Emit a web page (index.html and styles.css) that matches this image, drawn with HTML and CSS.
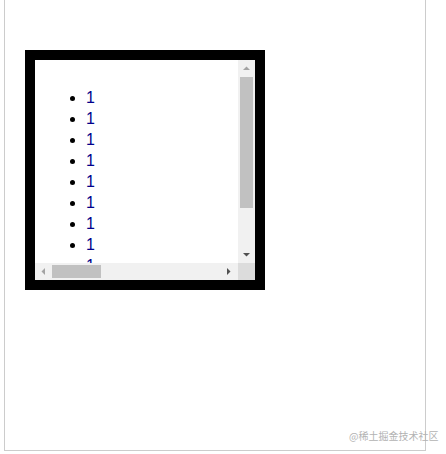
FILE: index.html
```html
<!DOCTYPE html>
<html lang="zh">
<head>
<meta charset="utf-8">
<title>scroll box</title>
<link rel="stylesheet" href="styles.css">
</head>
<body>
<div class="frame">
  <div class="box">
    <div class="scroller">
      <div class="viewport">
        <div class="content">
          <ul class="list">
            <li><a class="item">1</a></li>
            <li><a class="item">1</a></li>
            <li><a class="item">1</a></li>
            <li><a class="item">1</a></li>
            <li><a class="item">1</a></li>
            <li><a class="item">1</a></li>
            <li><a class="item">1</a></li>
            <li><a class="item">1</a></li>
            <li><a class="item">1</a></li>
            <li><a class="item">1</a></li>
          </ul>
        </div>
      </div>
      <div class="vbar">
        <div class="btn"><svg width="17" height="17" viewBox="0 0 17 17"><polygon class="arrow-off" points="5,10 12,10 8.5,6.5"/></svg></div>
        <div class="vtrack"><div class="vthumb"></div></div>
        <div class="btn"><svg width="17" height="17" viewBox="0 0 17 17"><polygon class="arrow-on" points="5,7 12,7 8.5,10.5"/></svg></div>
      </div>
      <div class="hbar">
        <div class="btn"><svg width="17" height="17" viewBox="0 0 17 17"><polygon class="arrow-off" points="10,5 10,12 6.5,8.5"/></svg></div>
        <div class="htrack"><div class="hthumb"></div></div>
        <div class="btn"><svg width="17" height="17" viewBox="0 0 17 17"><polygon class="arrow-on" points="6,5 6,12 9.5,8.5"/></svg></div>
      </div>
      <div class="corner"></div>
    </div>
  </div>
</div>
<div class="watermark">@稀土掘金技术社区</div>
</body>
</html>
```
FILE: styles.css
```css
html, body {
  margin: 0;
  padding: 0;
  background: #ffffff;
}

body {
  position: relative;
  width: 446px;
  height: 454px;
  overflow: hidden;
  font-family: "Liberation Sans", Arial, sans-serif;
}

.frame {
  box-sizing: border-box;
  margin-left: 4px;
  width: 422px;
  height: 451px;
  border: 1px solid #cccccc;
  border-top: none;
  padding: 50px 0 0 20px;
}

.box {
  width: 220px;
  height: 220px;
  border: 10px solid #000000;
  background: #ffffff;
}

.scroller {
  display: grid;
  grid-template-columns: 203px 17px;
  grid-template-rows: 203px 17px;
  width: 220px;
  height: 220px;
}

.viewport {
  overflow: hidden;
  background: #ffffff;
}

.content {
  box-sizing: border-box;
  width: 700px;
  padding: 10px;
}

.list {
  margin: 17px 0 15px;
  padding-left: 41px;
  font-size: 16px;
  line-height: 21px;
  color: #000000;
}

.item {
  color: #00008b;
  text-decoration: none;
}

.vbar {
  display: flex;
  flex-direction: column;
  background: #f1f1f1;
}

.hbar {
  display: flex;
  flex-direction: row;
  background: #f1f1f1;
}

.btn {
  width: 17px;
  height: 17px;
  flex: none;
}

.btn svg {
  display: block;
}

.arrow-on {
  fill: #505050;
}

.arrow-off {
  fill: #a3a3a3;
}

.vtrack {
  flex: 1;
}

.vthumb {
  width: 13px;
  height: 131px;
  margin: 0 2px;
  background: #c1c1c1;
}

.htrack {
  flex: 1;
}

.hthumb {
  width: 49px;
  height: 13px;
  margin: 2px 0;
  background: #c1c1c1;
}

.corner {
  background: #dcdcdc;
}

.watermark {
  position: absolute;
  left: 349px;
  top: 428px;
  font-family: "Noto Sans CJK SC", sans-serif;
  font-size: 10px;
  line-height: 16px;
  color: #b3b3b3;
  white-space: nowrap;
}
```
